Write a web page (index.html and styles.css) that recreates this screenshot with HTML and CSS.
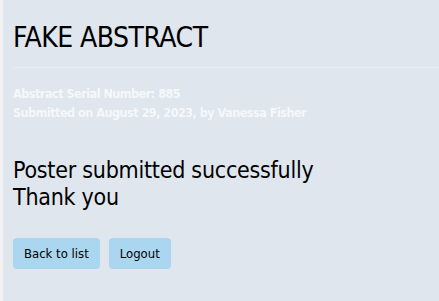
FILE: index.html
```html
<!DOCTYPE html>
<html>
<head>
<meta charset="utf-8">
<link rel="stylesheet" href="styles.css">
</head>
<body>
<div class="page">
  <div class="panel">
    <h1 class="title">FAKE ABSTRACT</h1>
    <hr class="rule">
    <div class="meta">
      <div>Abstract Serial Number: 885</div>
      <div>Submitted on August 29, 2023, by Vanessa Fisher</div>
    </div>
    <div class="message">
      <div>Poster submitted successfully</div>
      <div>Thank you</div>
    </div>
    <div class="actions">
      <button class="btn">Back to list</button>
      <button class="btn">Logout</button>
    </div>
  </div>
</div>
</body>
</html>
```

FILE: styles.css
```css
html, body {
  margin: 0;
  padding: 0;
  height: 100%;
}
body {
  background: #f2f2f2;
  font-family: "DejaVu Sans Condensed", "DejaVu Sans", sans-serif;
}
.page {
  padding-left: 3px;
  height: 100%;
  box-sizing: border-box;
}
.panel {
  background: #dfe6ee;
  height: 100%;
  padding: 20px 0 0 10px;
  box-sizing: border-box;
}
.title {
  margin: 0;
  font-weight: normal;
  font-size: 28px;
  line-height: 36px;
  letter-spacing: -0.5px;
  color: #000;
}
.rule {
  border: 0;
  border-top: 1px solid #e9eef3;
  margin: 11px 0 0 0;
  height: 0;
}
.meta {
  margin-top: 16px;
  color: #f5f8fb;
  font-weight: bold;
  font-size: 12.5px;
  line-height: 19px;
  letter-spacing: -0.5px;
}
.message {
  margin-top: 35px;
  font-size: 23px;
  line-height: 27px;
  letter-spacing: -0.25px;
  color: #000;
}
.actions {
  margin-top: 27px;
  display: flex;
  gap: 9px;
}
.btn {
  font-family: "DejaVu Sans Condensed", "DejaVu Sans", sans-serif;
  font-size: 13px;
  background: #aad6f0;
  border: 0;
  border-radius: 4px;
  height: 31px;
  padding: 0 11px;
  color: #000;
}
```
